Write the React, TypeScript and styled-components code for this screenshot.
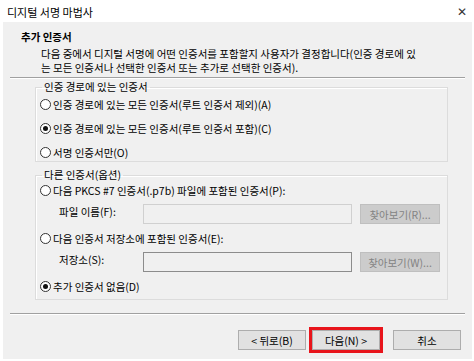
import React from 'react';
import styled, { createGlobalStyle } from 'styled-components';

const GlobalStyle = createGlobalStyle`
    body {
        margin: 0;
        font-family: "Noto Sans CJK KR", "Liberation Sans", sans-serif;
        font-size: 10.5px;
        color: #000;
    }
    * {
        box-sizing: border-box;
    }
`;

type RadioProps = {
    label: string;
    checked?: boolean;
};

function Radio({ label, checked }: RadioProps) {
    return (
        <StRadioRow>
            <StCircle checked={!!checked} />
            <span>{label}</span>
        </StRadioRow>
    );
}

type FileRowProps = {
    label: string;
    button: string;
    active?: boolean;
};

function FileRow({ label, button, active }: FileRowProps) {
    return (
        <StFileRow>
            <StFieldLabel>{label}</StFieldLabel>
            <StInput active={!!active} />
            <StBrowse>{button}</StBrowse>
        </StFileRow>
    );
}

function App() {
    return (
        <>
            <GlobalStyle />
            <StWindow>
                <StTitleBar>
                    <span>디지털 서명 마법사</span>
                    <StClose>✕</StClose>
                </StTitleBar>
                <StBody>
                    <StHeading>추가 인증서</StHeading>
                    <StDesc>
                        다음 중에서 디지털 서명에 어떤 인증서를 포함할지 사용자가 결정합니다(인증 경로에 있
                        <br />는 모든 인증서나 선택한 인증서 또는 추가로 선택한 인증서).
                    </StDesc>
                    <StSeparator />

                    <StGroup>
                        <StLegend>인증 경로에 있는 인증서</StLegend>
                        <StGroupInner1>
                            <Radio label="인증 경로에 있는 모든 인증서(루트 인증서 제외)(A)" />
                            <Radio label="인증 경로에 있는 모든 인증서(루트 인증서 포함)(C)" checked />
                            <Radio label="서명 인증서만(O)" />
                        </StGroupInner1>
                    </StGroup>

                    <StGroup second>
                        <StLegend>다른 인증서(옵션)</StLegend>
                        <StGroupInner2>
                            <Radio label="다음 PKCS #7 인증서(.p7b) 파일에 포함된 인증서(P):" />
                            <FileRow label="파일 이름(F):" button="찾아보기(R)..." />
                            <Radio label="다음 인증서 저장소에 포함된 인증서(E):" />
                            <FileRow label="저장소(S):" button="찾아보기(W)..." active />
                            <Radio label="추가 인증서 없음(D)" checked />
                        </StGroupInner2>
                    </StGroup>

                    <StSeparator bottom />

                    <StButtonBar>
                        <StButton>&lt; 뒤로(B)</StButton>
                        <StButton highlight>다음(N) &gt;</StButton>
                        <StButton cancel>취소</StButton>
                    </StButtonBar>
                </StBody>
            </StWindow>
        </>
    );
}

const StWindow = styled.div`
    width: 474px;
    height: 361px;
    background: #fff;
    display: flex;
    flex-direction: column;
    padding: 0 2px 2px 3px;
    overflow: hidden;
`;

const StTitleBar = styled.div`
    height: 22px;
    flex-shrink: 0;
    display: flex;
    align-items: center;
    justify-content: space-between;
    padding: 2px 5px 0 4px;
    font-size: 11px;
`;

const StClose = styled.span`
    font-size: 12px;
    color: #333;
    font-family: "DejaVu Sans", sans-serif;
    font-weight: 300;
`;

const StBody = styled.div`
    flex: 1;
    background: #f0f0f0;
    display: flex;
    flex-direction: column;
    padding-top: 8px;
`;

const StHeading = styled.div`
    font-weight: 700;
    line-height: 14px;
    padding-left: 18px;
`;

const StDesc = styled.div`
    line-height: 14px;
    padding-left: 38px;
    margin-top: 3px;
    white-space: nowrap;
`;

const StSeparator = styled.div<{ bottom?: boolean }>`
    margin: ${(p) => (p.bottom ? '13px 7px 0 7px' : '2px 7px 0 7px')};
    height: 2px;
    flex-shrink: 0;
    border-top: 1px solid #a0a0a0;
    border-bottom: 1px solid #fff;
`;

const StGroup = styled.fieldset<{ second?: boolean }>`
    margin: ${(p) => (p.second ? '6px 0 0 32px' : '1px 0 0 32px')};
    width: 413px;
    padding: 0;
    border: 1px solid #dcdcdc;
    box-shadow: inset 1px 1px 0 #fff;
    min-width: 0;
`;

const StLegend = styled.legend`
    margin-left: 6px;
    padding: 0 2px;
    line-height: 14px;
`;

const StGroupInner1 = styled.div`
    margin-top: -2px;
    margin-bottom: -3px;
    display: flex;
    flex-direction: column;
    & > div {
        height: 24px;
    }
`;

const StGroupInner2 = styled.div`
    display: flex;
    flex-direction: column;
    gap: 4px;
    margin-top: -2px;
    padding-bottom: 3px;
    & > div {
        height: 20px;
    }
`;

const StRadioRow = styled.div`
    display: flex;
    align-items: center;
    gap: 2px;
    padding-left: 4px;
    white-space: nowrap;
`;

const StCircle = styled.span<{ checked: boolean }>`
    width: 11px;
    height: 11px;
    border-radius: 50%;
    border: 1px solid #333;
    background: #fff;
    display: flex;
    align-items: center;
    justify-content: center;
    flex-shrink: 0;

    &::after {
        content: '';
        width: 5px;
        height: 5px;
        border-radius: 50%;
        background: ${(p) => (p.checked ? '#111' : 'transparent')};
    }
`;

const StFileRow = styled.div`
    display: flex;
    align-items: center;
    padding-left: 23px;
`;

const StFieldLabel = styled.span`
    width: 84px;
    align-self: flex-start;
    white-space: nowrap;
`;

const StInput = styled.div<{ active: boolean }>`
    width: 209px;
    height: 100%;
    background: #f0f0f0;
    border: 1px solid ${(p) => (p.active ? '#8c8c8c' : '#d0d0d0')};
`;

const StBrowse = styled.div`
    margin-left: 8px;
    width: 80px;
    height: 100%;
    background: #cccccc;
    border: 1px solid #bfbfbf;
    color: #838383;
    display: flex;
    align-items: center;
    justify-content: center;
`;

const StButtonBar = styled.div`
    display: flex;
    justify-content: flex-end;
    align-items: center;
    padding: 15px 11px 0 0;
`;

const StButton = styled.button<{ highlight?: boolean; cancel?: boolean }>`
    width: 68px;
    height: 20px;
    font-family: inherit;
    font-size: 10.5px;
    color: #000;
    background: #e1e1e1;
    border: 1px solid #adadad;
    padding: 0;
    margin-left: ${(p) => (p.cancel ? '13px' : p.highlight ? '6px' : '0')};
    outline: ${(p) => (p.highlight ? '3px solid #e8141b' : 'none')};
    outline-offset: 0;
`;

export default App;
